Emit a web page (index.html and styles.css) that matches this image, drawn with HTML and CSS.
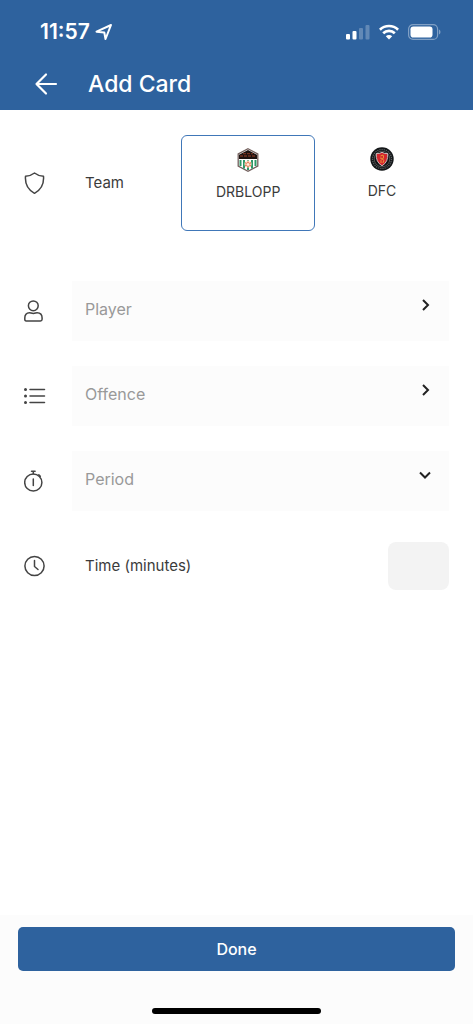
FILE: index.html
```html
<!DOCTYPE html>
<html lang="en">
<head>
  <meta charset="UTF-8" />
  <meta name="viewport" content="width=device-width, initial-scale=1.0"/>
  <title>Add Card</title>
  <link rel="stylesheet" href="styles.css">
</head>
<body>
  <header class="header">
    <div class="status-bar">
      <span class="time">11:57</span>
      <svg class="location" width="18" height="18" viewBox="0 0 18 18" fill="none" stroke="#fff" stroke-width="2" stroke-linejoin="round">
        <path d="M1.500 8.700 16 2 10.500 16 9.300 9.500Z"/>
      </svg>
      <div class="status-icons">
        <svg width="24" height="16" viewBox="0 0 24 16" fill="#fff">
          <rect x="0" y="10" width="4" height="5.500" rx="1"/>
          <rect x="6.5" y="7" width="4" height="8.500" rx="1"/>
          <rect x="13" y="4" width="4" height="11.500" rx="1" opacity=".25"/>
          <rect x="19.500" y="1" width="4" height="14.500" rx="1" opacity=".25"/>
        </svg>
        <svg width="20" height="16" viewBox="0 0 20 16" fill="none" stroke="#fff" stroke-width="2.700">
          <path d="M.9 5.700a13 13 0 0 1 18.200 0"/>
          <path d="M4.200 9.300a8.300 8.300 0 0 1 11.600 0"/>
          <path d="M10 15.500 6.800 12.300a4.600 4.600 0 0 1 6.400 0Z" fill="#fff" stroke="none"/>
        </svg>
        <svg width="33" height="16" viewBox="0 0 33 16">
          <rect x=".6" y=".6" width="29" height="14.800" rx="4.500" fill="none" stroke="#fff" stroke-opacity=".4" stroke-width="1.200"/>
          <rect x="2.500" y="2.500" width="22" height="11" rx="2.800" fill="#fff"/>
          <path d="M31 5.500c2 1 2 4 0 5Z" fill="#fff" opacity=".4"/>
        </svg>
      </div>
    </div>
    <div class="title-bar">
      <button class="back-btn" type="button" aria-label="Back">
        <svg width="24" height="24" viewBox="0 0 24 24" fill="none" stroke="#fff" stroke-width="2.200" stroke-linecap="round" stroke-linejoin="round">
          <path d="M22 12H2.500M12 2.500 2.500 12l9.500 9.500"/>
        </svg>
      </button>
      <h1>Add Card</h1>
    </div>
  </header>

  <form class="card-form" id="cardForm">
    <fieldset class="row team-row">
      <svg class="row-icon" width="24" height="24" viewBox="0 0 24 24">
        <path d="M10.500 2c2.500 2 5.500 3 9 3.300.6 7.500-2.500 13.500-9 17-6.500-3.500-9.600-9.500-9-17C5 5 8 4 10.500 2Z"/>
      </svg>
      <span class="row-label" id="teamLabel">Team</span>
      <div class="teams" role="radiogroup" aria-labelledby="teamLabel">
        <label class="team">
          <input type="radio" name="team" value="drblopp" checked>
          <svg width="24" height="24" viewBox="0 0 24 24">
            <path d="M12 .8 21.800 6v12L12 23.200 2.200 18V6Z" fill="#fff" stroke="#73605d" stroke-width="1.300"/>
            <path d="M12 2 21 6.800V11H3V6.800Z" fill="#1c1210"/>
            <path d="M4 8h16M7 5.600h10" stroke="#71301f" stroke-width="1.300" stroke-dasharray="3 1"/>
            <path d="M4.500 12v6M8 12v8.500M12 12v10M16 12v8.500M19.500 12v6" stroke="#2f9867" stroke-width="2"/>
            <circle cx="12" cy="16" r="3.500" fill="#fff0dd"/>
            <path d="M9.500 14.500 11 15.500l1-2 1 2 1.700-1-.8 2 1 1.500-2-.3-1 1.600-.8-1.800-1.800.5.800-1.800Z" fill="none" stroke="#e77955" stroke-width=".9"/>
          </svg>
          <span>DRBLOPP</span>
        </label>
        <label class="team">
          <input type="radio" name="team" value="dfc">
          <svg width="24" height="24" viewBox="0 0 24 24">
            <circle cx="12" cy="12" r="11.700" fill="#141719"/>
            <circle cx="12" cy="12" r="9.500" fill="none" stroke="#5d6264" stroke-width="1.200" stroke-dasharray="1.200 1"/>
            <circle cx="12" cy="12" r="7.800" fill="#101214" stroke="#777" stroke-width=".6"/>
            <path d="M6.300 6.500Q9.500 7 12 5.300q2.500 1.700 5.700 1.200.8 8.500-5.700 12.300Q5.500 15 6.300 6.500Z" fill="#d3262d" stroke="#ddd" stroke-width=".8"/>
            <path d="m10.500 9 2.500-1 .7 2-1 2 1 1.500-.7 2.500M12.500 12l-1.500 1.500v2.500M10 11l2.500.5" fill="none" stroke="#eca438" stroke-width=".9"/>
          </svg>
          <span>DFC</span>
        </label>
      </div>
    </fieldset>

    <div class="row">
      <svg class="row-icon" width="24" height="24" viewBox="0 0 24 24">
        <circle cx="9.300" cy="6.800" r="4.900"/>
        <path d="M5.500 13.700c1.200 0 2 .7 3.800.7s2.600-.7 3.800-.7c3.200 0 5 2.300 5 5.300v1.200c0 1-.7 1.700-1.700 1.700H2.200c-1 0-1.400-.7-1.400-1.700v-1.200c0-3 1.500-5.300 4.700-5.300Z"/>
      </svg>
      <button class="field" type="button">
        <span>Player</span>
        <svg class="chevron" width="12" height="12" viewBox="0 0 12 12"><path d="m3 1 5 5-5 5"/></svg>
      </button>
    </div>

    <div class="row">
      <svg class="row-icon" width="24" height="24" viewBox="0 0 24 24">
        <path d="M6 5.500h14.500M6 12h14.500M6 18.500h14.500"/>
        <path class="dots" d="M1.500 5.500h.01M1.500 12h.01M1.500 18.500h.01"/>
      </svg>
      <button class="field" type="button">
        <span>Offence</span>
        <svg class="chevron" width="12" height="12" viewBox="0 0 12 12"><path d="m3 1 5 5-5 5"/></svg>
      </button>
    </div>

    <div class="row">
      <svg class="row-icon" width="24" height="24" viewBox="0 0 24 24">
        <circle cx="9.300" cy="13.500" r="8.600"/>
        <path d="M9.300 10v6.500M7.500 2.300h3.600M9.300 2.300v2.500M14.800 5.800l1.500 1.500"/>
      </svg>
      <div class="select-wrap">
        <select class="field" name="period" aria-label="Period">
          <option value="">Period</option>
          <option value="1">First Half</option>
          <option value="2">Second Half</option>
        </select>
        <svg class="chevron" width="12" height="12" viewBox="0 0 12 12"><path d="m1 3.500 5 5 5-5"/></svg>
      </div>
    </div>

    <div class="row">
      <svg class="row-icon" width="24" height="24" viewBox="0 0 24 24">
        <circle cx="10.500" cy="12" r="9.600"/>
        <path d="M10.500 6.500v6l3.500 3"/>
      </svg>
      <label class="row-label" for="minutes">Time (minutes)</label>
      <input class="minutes" type="text" inputmode="numeric" id="minutes" name="minutes">
    </div>
  </form>

  <footer class="footer">
    <button class="done-btn" type="submit" form="cardForm">Done</button>
    <div class="home-indicator"></div>
  </footer>
</body>
</html>
```
FILE: styles.css
```css
:root {
  --primary: #2e629e;
  --field: #fcfcfc;
  --text: #3b3b3b;
  --placeholder: #999;
}

* {
  box-sizing: border-box;
}

body {
  margin: 0;
  min-height: 100vh;
  display: flex;
  flex-direction: column;
  background: #fff;
  font-family: Inter, "Liberation Sans", sans-serif;
  font-size: 16px;
  line-height: 20px;
  color: var(--text);
}

button,
select,
input {
  font: inherit;
  border: none;
}

button {
  cursor: pointer;
}

svg {
  display: block;
  flex: none;
}

.header {
  background: var(--primary);
  color: #fff;
  padding: 20px 32px 10px 40px;
}

.status-bar {
  display: flex;
  align-items: center;
  gap: 5px;
  height: 24px;
}

.time {
  font-size: 21px;
  font-weight: 600;
}

.status-icons {
  display: flex;
  gap: 9px;
  margin-left: auto;
}

.title-bar {
  display: flex;
  align-items: center;
  gap: 30px;
  padding-top: 24px;
}

.back-btn {
  margin-left: -6px;
  padding: 0;
  background: none;
}

.title-bar h1 {
  margin: 0;
  font-size: 23px;
  line-height: 32px;
  font-weight: 500;
}

.card-form {
  flex: 1;
  display: flex;
  flex-direction: column;
  gap: 25px;
  padding: 25px 24px;
}

.row {
  display: flex;
  align-items: center;
  min-height: 60px;
  gap: 24px;
}

.team-row {
  margin: 0 0 25px;
  padding: 0;
  border: none;
}

.row-icon {
  fill: none;
  stroke: #444;
  stroke-width: 1.5;
  stroke-linecap: round;
  stroke-linejoin: round;
}

.dots {
  stroke-width: 3;
}

.row-label {
  flex: 1;
  padding-left: 13px;
  font-size: 15px;
}

.teams {
  flex: none;
  width: 63%;
  display: grid;
  grid-template-columns: 1fr 1fr;
}

.team {
  position: relative;
  display: flex;
  flex-direction: column;
  align-items: center;
  gap: 10px;
  height: 96px;
  padding-top: 12px;
  border-radius: 6px;
  font-size: 14px;
  cursor: pointer;
}

.team:has(input:checked) {
  border: 1px solid #4077b8;
}

.team input {
  position: absolute;
  opacity: 0;
}

.field {
  flex: 1;
  display: flex;
  justify-content: space-between;
  align-items: center;
  width: 100%;
  height: 60px;
  padding: 0 17px 4px 13px;
  border-radius: 0;
  background: var(--field);
  color: var(--placeholder);
  text-align: left;
  appearance: none;
}

.select-wrap {
  position: relative;
  flex: 1;
}

.select-wrap .chevron {
  position: absolute;
  top: 18px;
  right: 18px;
  pointer-events: none;
}

.chevron {
  fill: none;
  stroke: #222;
  stroke-width: 2;
}

.field .chevron {
  margin-bottom: 8px;
}

.minutes {
  width: 61px;
  height: 48px;
  padding: 0 8px;
  border-radius: 8px;
  background: #f3f3f3;
  text-align: center;
}

.footer {
  display: flex;
  flex-direction: column;
  align-items: center;
  gap: 37px;
  padding: 12px 18px 10px;
  background: var(--field);
}

.done-btn {
  width: 100%;
  height: 44px;
  border-radius: 5px;
  background: var(--primary);
  color: #fff;
  font-weight: 500;
}

.home-indicator {
  width: 169px;
  height: 6px;
  border-radius: 3px;
  background: #000;
}
```
